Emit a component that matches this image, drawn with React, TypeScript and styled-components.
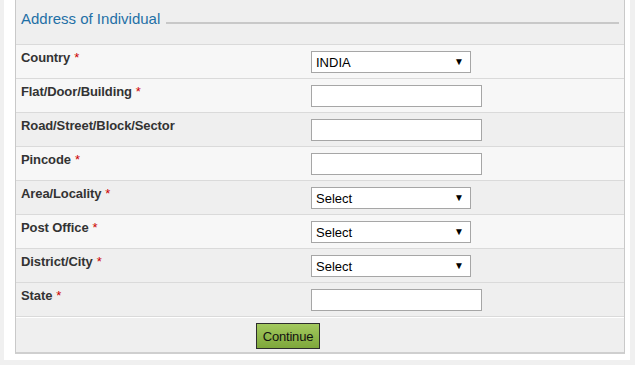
import * as React from "react"
import styled, { createGlobalStyle } from "styled-components";

const GlobalStyle = createGlobalStyle`
  html, body {
    margin: 0;
    padding: 0;
    background: #ffffff;
    font-family: "Liberation Sans", Arial, sans-serif;
  }
`

export const Page = styled.div`
  width: 626px;
  padding: 0 5px 5px 4px;
  background: #f0f0f0;
`

export const Sheet = styled.div`
  background: #ffffff;
  padding: 0 5px 6px 11px;
`

export const Panel = styled.div`
  border: 1px solid #c9c9c9;
  border-top: none;
  border-bottom: 2px solid #cfcfcf;
  background: #efefef;
`

export const Legend = styled.div`
  height: 44px;
  display: flex;
  align-items: flex-start;
  padding: 10px 5px 0 5px;
  box-sizing: border-box;
  gap: 6px;
`

export const LegendTitle = styled.span`
  font-size: 15px;
  line-height: 18px;
  color: #1f70a6;
  white-space: nowrap;
`

export const LegendRule = styled.div`
  flex: 1;
  height: 2px;
  margin-top: 12px;
  background: #c8c8c8;
`

export const Row = styled.div<{ $light?: boolean }>`
  display: grid;
  grid-template-columns: 290px 1fr;
  height: 34px;
  box-sizing: border-box;
  border-top: 1px solid #dadada;
  background: ${p => (p.$light ? "#f7f7f7" : "#efefef")};
  padding-left: 5px;
`

export const Label = styled.div`
  font-size: 13px;
  font-weight: bold;
  line-height: 16px;
  color: #333333;
  padding-top: 5px;
  letter-spacing: -0.1px;
`

export const Star = styled.span`
  color: #cc0000;
  font-weight: normal;
  margin-left: 4px;
`

export const Field = styled.div`
  padding-top: 6px;
`

export const TextBox = styled.input`
  display: block;
  width: 171px;
  height: 22px;
  box-sizing: border-box;
  border: 1px solid #a6a6a6;
  background: #ffffff;
  margin: 0;
  padding: 0 4px;
  font-family: "Liberation Sans", Arial, sans-serif;
  font-size: 13px;
  outline: none;
`

export const SelectWrap = styled.div`
  position: relative;
  width: 160px;
  height: 22px;
`

export const SelectBox = styled.select`
  appearance: none;
  -webkit-appearance: none;
  display: block;
  width: 160px;
  height: 22px;
  box-sizing: border-box;
  border: 1px solid #a6a6a6;
  border-radius: 0;
  background: #ffffff;
  margin: 0;
  padding: 0 0 0 4px;
  font-family: "Liberation Sans", Arial, sans-serif;
  font-size: 13px;
  color: #000000;
  outline: none;
`

export const Arrow = styled.span`
  position: absolute;
  right: 7px;
  top: 5px;
  font-size: 10px;
  line-height: 12px;
  color: #000000;
  pointer-events: none;
`

export const Footer = styled.div`
  height: 36px;
  box-sizing: border-box;
  border-top: 1px solid #dadada;
  box-shadow: inset 0 1px 0 #ffffff;
  padding: 6px 0 0 240px;
`

export const ContinueButton = styled.button`
  width: 64px;
  height: 26px;
  box-sizing: border-box;
  border: 1px solid #2d2d2d;
  background: linear-gradient(#a3c95e, #7ea73b);
  font-family: "Liberation Sans", Arial, sans-serif;
  font-size: 13px;
  letter-spacing: -0.2px;
  color: #111111;
  padding: 0;
  cursor: pointer;
`

type FieldDef = {
    label: string;
    required: boolean;
    kind: "text" | "select";
    value?: string;
    light?: boolean;
}

const fields: FieldDef[] = [
    { label: "Country", required: true, kind: "select", value: "INDIA", light: true },
    { label: "Flat/Door/Building", required: true, kind: "text", light: true },
    { label: "Road/Street/Block/Sector", required: false, kind: "text" },
    { label: "Pincode", required: true, kind: "text", light: true },
    { label: "Area/Locality", required: true, kind: "select", value: "Select" },
    { label: "Post Office", required: true, kind: "select", value: "Select", light: true },
    { label: "District/City", required: true, kind: "select", value: "Select" },
    { label: "State", required: true, kind: "text" },
]

const App = () => {
    return (
        <>
            <GlobalStyle />
            <Page>
                <Sheet>
                    <Panel>
                        <Legend>
                            <LegendTitle>Address of Individual</LegendTitle>
                            <LegendRule />
                        </Legend>
                        {fields.map(f => (
                            <Row key={f.label} $light={f.light}>
                                <Label>
                                    {f.label}
                                    {f.required && <Star>*</Star>}
                                </Label>
                                <Field>
                                    {f.kind === "text" ? (
                                        <TextBox type="text" />
                                    ) : (
                                        <SelectWrap>
                                            <SelectBox defaultValue={f.value}>
                                                <option>{f.value}</option>
                                            </SelectBox>
                                            <Arrow>▼</Arrow>
                                        </SelectWrap>
                                    )}
                                </Field>
                            </Row>
                        ))}
                        <Footer>
                            <ContinueButton>Continue</ContinueButton>
                        </Footer>
                    </Panel>
                </Sheet>
            </Page>
        </>
    )
}

export default App
